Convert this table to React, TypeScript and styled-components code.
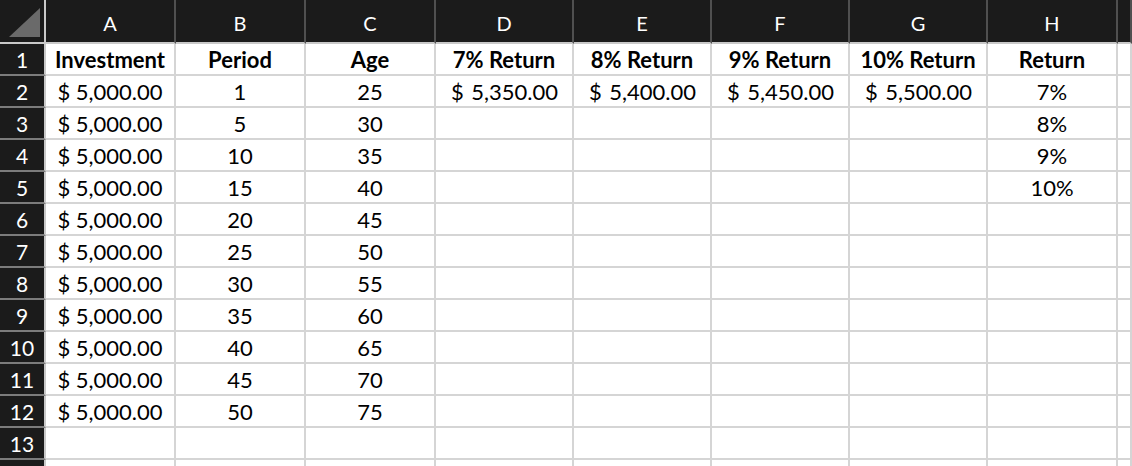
import styled, { createGlobalStyle } from 'styled-components';

const GlobalStyle = createGlobalStyle`
    html, body {
        margin: 0;
        padding: 0;
        background: #ffffff;
        overflow: hidden;
    }

    body {
        font-family: Lato, 'Open Sans', sans-serif;
    }
`;

const COLUMNS = ['A', 'B', 'C', 'D', 'E', 'F', 'G', 'H', ''];

const Sheet = styled.div`
    display: grid;
    grid-template-columns: 46px 130px 130px 130px 138px 138px 138px 138px 130px 1fr;
    grid-auto-rows: 32px;
    grid-template-rows: 44px;
    width: 1132px;
    height: 466px;
    overflow: hidden;
    color: #000;
`;

const Corner = styled.div`
    position: relative;
    background: #1b1b1b;
    border-right: 2px solid #c9c9c9;
    border-bottom: 2px solid #c9c9c9;

    svg {
        position: absolute;
        left: 9px;
        top: 8px;
    }
`;

const ColHead = styled.div`
    display: flex;
    align-items: center;
    justify-content: center;
    padding-top: 3px;
    background: #1b1b1b;
    color: #ffffff;
    font-size: 20px;
    border-right: 2px solid #505050;
    border-bottom: 2px solid #c9c9c9;
`;

const RowHead = styled.div`
    display: flex;
    align-items: center;
    justify-content: center;
    padding-top: 1px;
    background: #1b1b1b;
    color: #ffffff;
    font-size: 21px;
    border-right: 2px solid #c9c9c9;
    border-bottom: 2px solid #7c7c7c;
`;

const Cell = styled.div<{ $bold?: boolean; $money?: boolean }>`
    display: flex;
    align-items: center;
    justify-content: ${({ $money }) => ($money ? 'space-between' : 'center')};
    padding: ${({ $money }) => ($money ? '1px 14px 0 15px' : '1px 0 0')};
    font-size: 22px;
    font-weight: ${({ $bold }) => ($bold ? 700 : 400)};
    white-space: nowrap;
    overflow: hidden;
    border-right: 2px solid #d5d5d5;
    border-bottom: 2px solid #d5d5d5;
`;

type Row = (string | { money: string })[];

const money = (v: string) => ({ money: v });

const header: Row = ['Investment', 'Period', 'Age', '7% Return', '8% Return', '9% Return', '10% Return', 'Return', ''];

const rows: Row[] = [
    ['$ 5,000.00', '1', '25', money('5,350.00'), money('5,400.00'), money('5,450.00'), money('5,500.00'), '7%', ''],
    ['$ 5,000.00', '5', '30', '', '', '', '', '8%', ''],
    ['$ 5,000.00', '10', '35', '', '', '', '', '9%', ''],
    ['$ 5,000.00', '15', '40', '', '', '', '', '10%', ''],
    ['$ 5,000.00', '20', '45', '', '', '', '', '', ''],
    ['$ 5,000.00', '25', '50', '', '', '', '', '', ''],
    ['$ 5,000.00', '30', '55', '', '', '', '', '', ''],
    ['$ 5,000.00', '35', '60', '', '', '', '', '', ''],
    ['$ 5,000.00', '40', '65', '', '', '', '', '', ''],
    ['$ 5,000.00', '45', '70', '', '', '', '', '', ''],
    ['$ 5,000.00', '50', '75', '', '', '', '', '', ''],
    ['', '', '', '', '', '', '', '', ''],
    ['', '', '', '', '', '', '', '', ''],
];

const App = () => {
    return (
        <>
            <GlobalStyle />
            <Sheet>
                <Corner>
                    <svg width="31" height="30" viewBox="0 0 31 30">
                        <polygon points="0,29 31,0 31,29" fill="#6a6a6a" />
                    </svg>
                </Corner>
                {COLUMNS.map((c, i) => (
                    <ColHead key={i}>{c}</ColHead>
                ))}

                <RowHead>1</RowHead>
                {header.map((h, i) => (
                    <Cell key={i} $bold>
                        {h as string}
                    </Cell>
                ))}

                {rows.map((row, r) => (
                    <>
                        {/* the last row is cut by the window, its number is out of sight */}
                        <RowHead key={`h${r}`}>{r < rows.length - 1 ? r + 2 : ''}</RowHead>
                        {row.map((v, i) =>
                            typeof v === 'string' ? (
                                <Cell key={`${r}-${i}`}>{v}</Cell>
                            ) : (
                                <Cell key={`${r}-${i}`} $money>
                                    <span>$</span>
                                    <span>{v.money}</span>
                                </Cell>
                            )
                        )}
                    </>
                ))}
            </Sheet>
        </>
    );
};

export default App;
